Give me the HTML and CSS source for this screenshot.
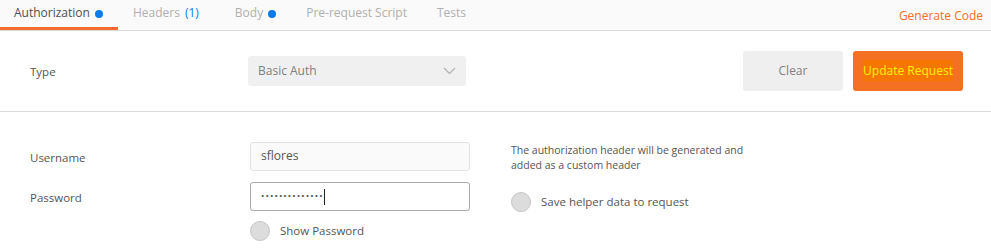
FILE: index.html
```html
<!doctype html>
<html lang="en">
<head>
	<meta charset="utf-8">
	<title>Authorization</title>
	<link rel="stylesheet" href="styles.css">
</head>
<body>

	<div class="tabs">
		<div class="tab tab-active">Authorization <span class="dot"></span></div>
		<div class="tab tab-headers">Headers <span class="count">(1)</span></div>
		<div class="tab">Body <span class="dot"></span></div>
		<div class="tab">Pre-request Script</div>
		<div class="tab">Tests</div>
		<div class="tabs-link">Generate Code</div>
	</div>

	<div class="type-row">
		<div class="label">Type</div>
		<div class="select">
			Basic Auth
			<svg class="select-arrow" width="13" height="8" viewBox="0 0 13 8"><path d="M1 1l5.5 5.5L12 1" fill="none" stroke="#b5b5b5" stroke-width="1.3"/></svg>
		</div>
		<div class="actions">
			<button class="btn btn-clear">Clear</button>
			<button class="btn btn-update"><span class="btn-mark">Update Request</span></button>
		</div>
	</div>

	<div class="form">
		<div class="form-fields">
			<div class="form-row">
				<div class="label">Username</div>
				<div class="field">sflores</div>
			</div>
			<div class="form-row">
				<div class="label">Password</div>
				<div class="field field-focus"><span class="dots">··············</span><span class="caret"></span></div>
			</div>
			<label class="check check-shift">
				<span class="check-box"></span>Show Password
			</label>
		</div>

		<div class="form-help">
			<p class="help-text">The authorization header will be generated and<br>added as a custom header</p>
			<label class="check">
				<span class="check-box"></span>Save helper data to request
			</label>
		</div>
	</div>

</body>
</html>
```

FILE: styles.css
```css
* {
	box-sizing: border-box;
	margin: 0;
	padding: 0;
}

body {
	width: 991px;
	color: #505050;
	font: 400 11.5px/1.4 'Open Sans', 'Liberation Sans', sans-serif;
	background: #fff;
}

/* Tabs */

.tabs {
	display: flex;
	height: 31px;
	background: #fafafa;
	border-bottom: 1px solid #dcdcdc;
}

.tab {
	display: flex;
	align-items: center;
	gap: 5px;
	height: 30px;
	padding: 0 15px 3px;
	color: #b0b0b0;
	font-size: 12px;
}

.tab:first-child {
	padding-left: 14px;
}

.tab-active {
	color: #505050;
	border-bottom: 3px solid #f26b2d;
	padding-bottom: 0;
}

.tab-headers {
	padding-right: 21px;
}

.dot {
	width: 8px;
	height: 8px;
	border-radius: 50%;
	background: #097bed;
}

.count {
	color: #097bed;
}

.tabs-link {
	margin-left: auto;
	padding: 3px 8px 0 0;
	display: flex;
	align-items: center;
	color: #f47023;
	font-size: 12px;
}

/* Type row */

.type-row {
	display: flex;
	align-items: center;
	padding: 20px 28px 20px 30px;
	border-bottom: 1px solid #dcdcdc;
}

.label {
	width: 218px;
	color: #555;
	padding-top: 2px;
}

.select {
	display: flex;
	align-items: center;
	justify-content: space-between;
	width: 218px;
	height: 30px;
	padding: 0 10px;
	color: #808080;
	background: #f0f0f0;
	border-radius: 3px;
	font-size: 12px;
}

.actions {
	display: flex;
	gap: 10px;
	margin-left: auto;
}

.btn {
	height: 40px;
	border: none;
	border-radius: 3px;
	font: inherit;
	font-size: 12px;
	cursor: pointer;
}

.btn-clear {
	width: 100px;
	color: #808080;
	background: #efefef;
}

.btn-update {
	width: 110px;
	background: #f47023;
}

.btn-mark {
	color: #ffee00;
	background: #f77600;
	padding: 2px 0;
}

/* Form */

.form {
	display: flex;
	padding: 30px 0 0 30px;
}

.form-fields {
	display: flex;
	flex-direction: column;
	gap: 11px;
}

.form-row {
	display: flex;
	align-items: center;
}

.form-row .label {
	width: 220px;
	padding-top: 4px;
}

.field {
	display: flex;
	align-items: center;
	width: 220px;
	height: 29px;
	padding: 0 10px;
	color: #555;
	background: #fafafa;
	border: 1px solid #e3e3e3;
	border-radius: 3px;
	font-size: 12px;
}

.field-focus {
	background: #fff;
	border-color: #aaa;
}

.dots {
	color: #555;
	letter-spacing: 1.05px;
	font-weight: 700;
}

.caret {
	width: 1px;
	height: 16px;
	background: #222;
}

.check {
	display: flex;
	align-items: center;
	gap: 10px;
	color: #555;
	cursor: pointer;
}

.check-shift {
	margin: -1px 0 0 220px;
}

.check-box {
	width: 20px;
	height: 20px;
	border-radius: 50%;
	background: #dcdcdc;
	border: 1px solid #c6c6c6;
}

.form-help {
	display: flex;
	flex-direction: column;
	gap: 19px;
	margin-left: 41px;
}

.help-text {
	font-size: 10.5px;
	line-height: 15px;
	color: #555;
	margin-top: 1px;
}
```
